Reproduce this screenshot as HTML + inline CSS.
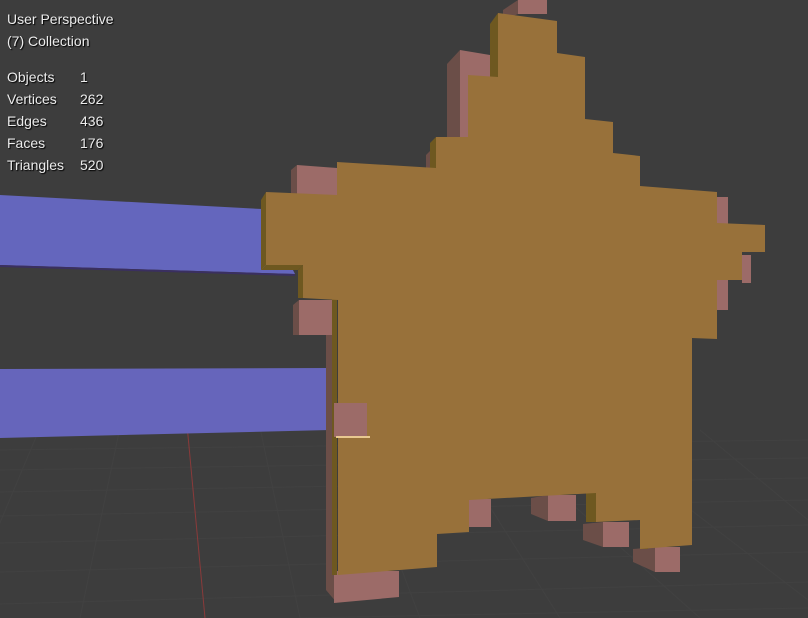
<!DOCTYPE html>
<html><head><style>
html,body{margin:0;padding:0;background:#3d3d3d;}
.w{position:relative;width:808px;height:618px;overflow:hidden;background:#3d3d3d;}
svg{position:absolute;left:0;top:0;}
.t{position:absolute;left:7px;color:#ececec;font:14px "Liberation Sans",sans-serif;text-shadow:1px 1px 1px #000;white-space:pre;}
.v{position:absolute;left:73px;}
</style></head><body><div class="w">
<svg width="808" height="618" viewBox="0 0 808 618">
<g stroke="#454545" stroke-width="1" fill="none" opacity="0.6">
<path d="M0 450 L808 440 M0 470 L808 458 M0 492 L808 478 M0 516 L808 500 M0 543 L808 525 M0 572 L808 552 M0 604 L808 582 M300 618 L808 608"/>
<path d="M60 380 L-40 618 M130 380 L80 618 M250 380 L300 618 M330 380 L420 618 M410 380 L560 618 M500 440 L700 618 M600 440 L808 600 M700 430 L808 520"/>
</g>
<line x1="183" y1="382" x2="205" y2="618" stroke="#8a3a3a" stroke-width="1"/>
<polygon points="0,195 262,209 295,274 0,265" fill="#6466bd"/>
<line x1="0" y1="266" x2="295" y2="275" stroke="#3a2f60" stroke-width="2"/>
<polygon points="0,369 330,368 330,430 0,438" fill="#6665bb"/>
<g fill="#6b4e48">
<polygon points="503,10 518,0 518,14 503,20"/>
<polygon points="447,64 460,50 460,137 447,137"/>
<polygon points="426,155 436,145 436,168 426,168"/>
<polygon points="291,170 297,165 297,195 291,195"/>
<polygon points="293,305 299,300 299,335 293,335"/>
<polygon points="326,300 337,300 337,603 326,590"/>
<polygon points="531,498 548,495 548,521 531,514"/>
<polygon points="583,524 603,522 603,547 583,540"/>
<polygon points="633,549 655,547 655,572 633,562"/>
</g>
<g fill="#9c6b68">
<rect x="518" y="0" width="29" height="14"/>
<polygon points="460,50 490,55 490,137 460,137"/>
<polygon points="297,165 337,168 337,195 297,195"/>
<rect x="717" y="197" width="11" height="113"/>
<rect x="742" y="255" width="9" height="28"/>
<rect x="299" y="300" width="34" height="35"/>
<polygon points="334,571 399,571 399,597 334,603"/>
<rect x="469" y="499" width="22" height="28"/>
<rect x="548" y="495" width="28" height="26"/>
<rect x="603" y="522" width="26" height="25"/>
<rect x="655" y="547" width="25" height="25"/>
</g>
<g fill="#6e5820">
<polygon points="490,24 498,13 498,77 490,77"/>
<polygon points="462,140 468,137 468,145 462,145"/>
<polygon points="430,143 436,137 436,168 430,168"/>
<polygon points="261,200 266,192 266,265 261,270"/>
<polygon points="261,270 266,265 303,265 298,270"/>
<polygon points="298,270 303,265 303,298 298,298"/>
<polygon points="332,200 337,195 337,575 332,575"/>
<polygon points="586,493 596,493 596,522 586,522"/>
<polygon points="640,520 648,520 648,549 640,549"/>
<polygon points="367,403 372,403 372,437 367,437"/>
</g>
<polygon fill="#98713a" points="498,13 557,21 557,53 585,57 585,119 613,122 613,153 640,156 640,186 717,192 717,223 765,225 765,252 742,252 742,280 717,280 717,339 692,338 692,545 640,549 640,520 596,522 596,493 469,500 469,532 437,534 437,567 338,575 338,300 303,298 303,265 266,265 266,192 337,195 337,162 436,168 436,137 468,137 468,75 498,77"/>
<polygon fill="#9c6b68" points="334,403 367,403 367,437 334,437"/>
<line x1="336" y1="437" x2="370" y2="437" stroke="#e8c890" stroke-width="2"/>
</svg>
<div class="t" style="top:11px">User Perspective</div>
<div class="t" style="top:33px">(7) Collection</div>
<div class="t" style="top:69px">Objects<span class="v">1</span></div>
<div class="t" style="top:91px">Vertices<span class="v">262</span></div>
<div class="t" style="top:113px">Edges<span class="v">436</span></div>
<div class="t" style="top:135px">Faces<span class="v">176</span></div>
<div class="t" style="top:157px">Triangles<span class="v">520</span></div>
</div></body></html>
